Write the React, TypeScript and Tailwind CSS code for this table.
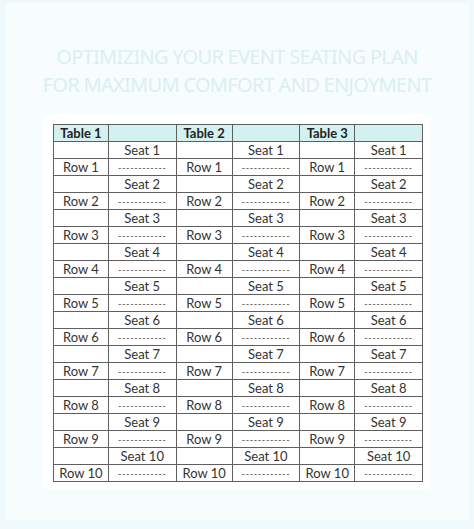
import React from 'react';

const colWidths = ['w-[55px]', 'w-[68px]', 'w-[56px]', 'w-[68px]', 'w-[55px]', 'w-[68px]'];

const rows = Array.from({ length: 10 }, (_, i) => i + 1);

function SeatRow({ n }: { n: number }) {
  return (
    <tr>
      {[0, 1, 2].map((t) => (
        <React.Fragment key={t}>
          <td className="border border-[#5f5f5f] h-[17px] p-0"></td>
          <td className="border border-[#5f5f5f] h-[17px] p-0 text-center">Seat {n}</td>
        </React.Fragment>
      ))}
    </tr>
  );
}

function NameRow({ n }: { n: number }) {
  return (
    <tr>
      {[0, 1, 2].map((t) => (
        <React.Fragment key={t}>
          <td className="border border-[#5f5f5f] h-[17px] p-0 text-center">Row {n}</td>
          <td className="border border-[#5f5f5f] h-[17px] p-0 text-center text-[9px] text-[#444] tracking-[0.7px]">------------</td>
        </React.Fragment>
      ))}
    </tr>
  );
}

export default function App() {
  return (
    <div className="w-[474px] h-[529px] bg-[#eff9fc] px-[5px] pt-[3px] pb-[9px] font-['Lato','Noto_Sans',sans-serif]">
      <div className="h-full bg-[#f7fcfd] flex flex-col items-center">
        {/* Title */}
        <div className="pt-[40px] text-center text-[20px] leading-[28px] text-[#daeff3] font-['Noto_Sans',sans-serif] tracking-[-0.7px]">
          <div>OPTIMIZING YOUR EVENT SEATING PLAN</div>
          <div>FOR MAXIMUM COMFORT AND ENJOYMENT</div>
        </div>

        {/* Table panel */}
        <div className="mt-[16px] w-[388px] bg-white pl-[10px] pr-[8px] pt-[9px] pb-[7px]">
          <table className="table-fixed border-collapse text-[13px] text-[#333] leading-none">
            <colgroup>
              {colWidths.map((w, i) => (
                <col key={i} className={w} />
              ))}
            </colgroup>
            <thead>
              <tr className="bg-[#d4f1f2]">
                {['Table 1', '', 'Table 2', '', 'Table 3', ''].map((h, i) => (
                  <th key={i} className="border border-[#5f5f5f] h-[17px] p-0 text-center font-bold text-[#222]">
                    {h}
                  </th>
                ))}
              </tr>
            </thead>
            <tbody>
              {rows.map((n) => (
                <React.Fragment key={n}>
                  <SeatRow n={n} />
                  <NameRow n={n} />
                </React.Fragment>
              ))}
            </tbody>
          </table>
        </div>
      </div>
    </div>
  );
}
